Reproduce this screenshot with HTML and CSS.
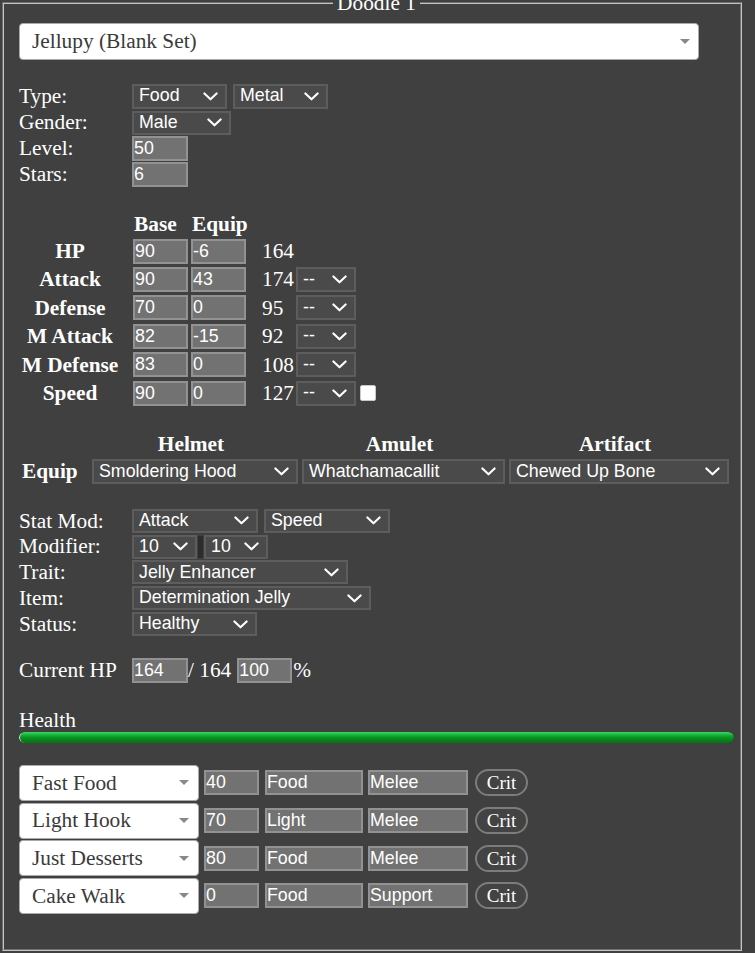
FILE: index.html
```html
<!DOCTYPE html>
<html lang="en">
<head>
<meta charset="utf-8">
<title>Doodle Builder</title>
<link rel="stylesheet" href="styles.css">
</head>
<body>
<svg class="defs" width="0" height="0" aria-hidden="true">
  <symbol id="chev" viewBox="0 0 15 9">
    <path d="M1.4 1.4 L7.5 7.3 L13.6 1.4" fill="none" stroke="#fff" stroke-width="2.1" stroke-linecap="round" stroke-linejoin="round"/>
  </symbol>
</svg>

<fieldset class="doodle">
  <legend>Doodle 1</legend>

  <div class="picker picker-species">
    <span class="picker-text">Jellupy (Blank Set)</span>
    <span class="picker-arrow"></span>
  </div>

  <div class="info">
    <div class="row info-type">
      <span class="lbl">Type:</span>
      <div class="ctrls">
        <span class="sel w-type">Food<svg class="chev"><use href="#chev"/></svg></span>
        <span class="sel w-type">Metal<svg class="chev"><use href="#chev"/></svg></span>
      </div>
    </div>
    <div class="row info-gender">
      <span class="lbl">Gender:</span>
      <div class="ctrls">
        <span class="sel w-gender">Male<svg class="chev"><use href="#chev"/></svg></span>
      </div>
    </div>
    <div class="row info-level">
      <span class="lbl">Level:</span>
      <input class="num w-small" value="50">
    </div>
    <div class="row info-stars">
      <span class="lbl">Stars:</span>
      <input class="num w-small" value="6">
    </div>
  </div>

  <div class="stats">
    <div class="stat-head">
      <span class="stat-name"></span>
      <span class="col-h">Base</span>
      <span class="col-h">Equip</span>
    </div>
    <div class="stat-row">
      <span class="stat-name">HP</span>
      <input class="num w-stat" value="90">
      <input class="num w-stat" value="-6">
      <span class="stat-val">164</span>
    </div>
    <div class="stat-row">
      <span class="stat-name">Attack</span>
      <input class="num w-stat" value="90">
      <input class="num w-stat" value="43">
      <span class="stat-val">174</span>
      <span class="sel w-nature">--<svg class="chev"><use href="#chev"/></svg></span>
    </div>
    <div class="stat-row">
      <span class="stat-name">Defense</span>
      <input class="num w-stat" value="70">
      <input class="num w-stat" value="0">
      <span class="stat-val">95</span>
      <span class="sel w-nature">--<svg class="chev"><use href="#chev"/></svg></span>
    </div>
    <div class="stat-row">
      <span class="stat-name">M Attack</span>
      <input class="num w-stat" value="82">
      <input class="num w-stat" value="-15">
      <span class="stat-val">92</span>
      <span class="sel w-nature">--<svg class="chev"><use href="#chev"/></svg></span>
    </div>
    <div class="stat-row">
      <span class="stat-name">M Defense</span>
      <input class="num w-stat" value="83">
      <input class="num w-stat" value="0">
      <span class="stat-val">108</span>
      <span class="sel w-nature">--<svg class="chev"><use href="#chev"/></svg></span>
    </div>
    <div class="stat-row">
      <span class="stat-name">Speed</span>
      <input class="num w-stat" value="90">
      <input class="num w-stat" value="0">
      <span class="stat-val">127</span>
      <span class="sel w-nature">--<svg class="chev"><use href="#chev"/></svg></span>
      <input type="checkbox" class="chk">
    </div>
  </div>

  <div class="equip">
    <div class="equip-head">
      <span class="equip-h w-helmet">Helmet</span>
      <span class="equip-h w-amulet">Amulet</span>
      <span class="equip-h w-artifact">Artifact</span>
    </div>
    <div class="equip-row">
      <span class="equip-lbl">Equip</span>
      <span class="sel w-helmet">Smoldering Hood<svg class="chev"><use href="#chev"/></svg></span>
      <span class="sel w-amulet">Whatchamacallit<svg class="chev"><use href="#chev"/></svg></span>
      <span class="sel w-artifact">Chewed Up Bone<svg class="chev"><use href="#chev"/></svg></span>
    </div>
  </div>

  <div class="mods">
    <div class="row">
      <span class="lbl">Stat Mod:</span>
      <div class="ctrls">
        <span class="sel sel-sm w-statmod">Attack<svg class="chev"><use href="#chev"/></svg></span>
        <span class="sel sel-sm w-statmod">Speed<svg class="chev"><use href="#chev"/></svg></span>
      </div>
    </div>
    <div class="row">
      <span class="lbl">Modifier:</span>
      <div class="ctrls ctrls-tight">
        <span class="sel sel-sm w-mod">10<svg class="chev"><use href="#chev"/></svg></span>
        <span class="mod-sep"></span>
        <span class="sel sel-sm w-mod2">10<svg class="chev"><use href="#chev"/></svg></span>
      </div>
    </div>
    <div class="row">
      <span class="lbl">Trait:</span>
      <span class="sel sel-sm w-trait">Jelly Enhancer<svg class="chev"><use href="#chev"/></svg></span>
    </div>
    <div class="row">
      <span class="lbl">Item:</span>
      <span class="sel sel-sm w-item">Determination Jelly<svg class="chev"><use href="#chev"/></svg></span>
    </div>
    <div class="row">
      <span class="lbl">Status:</span>
      <span class="sel sel-sm w-status">Healthy<svg class="chev"><use href="#chev"/></svg></span>
    </div>
  </div>

  <div class="row cur-hp">
    <span class="lbl">Current HP</span>
    <input class="num w-small" value="164">
    <span class="hp-max">/ 164</span>
    <input class="num w-stat" value="100">
    <span class="hp-pct">%</span>
  </div>

  <div class="health">
    <div class="health-lbl">Health</div>
    <div class="health-bar"><div class="health-fill" style="width:100%"></div></div>
  </div>

  <div class="moves">
    <div class="move">
      <div class="picker picker-move"><span class="picker-text">Fast Food</span><span class="picker-arrow"></span></div>
      <input class="num move-power" value="40">
      <input class="num move-type" value="Food">
      <input class="num move-cat" value="Melee">
      <button class="crit" type="button">Crit</button>
    </div>
    <div class="move">
      <div class="picker picker-move"><span class="picker-text">Light Hook</span><span class="picker-arrow"></span></div>
      <input class="num move-power" value="70">
      <input class="num move-type" value="Light">
      <input class="num move-cat" value="Melee">
      <button class="crit" type="button">Crit</button>
    </div>
    <div class="move">
      <div class="picker picker-move"><span class="picker-text">Just Desserts</span><span class="picker-arrow"></span></div>
      <input class="num move-power" value="80">
      <input class="num move-type" value="Food">
      <input class="num move-cat" value="Melee">
      <button class="crit" type="button">Crit</button>
    </div>
    <div class="move">
      <div class="picker picker-move"><span class="picker-text">Cake Walk</span><span class="picker-arrow"></span></div>
      <input class="num move-power" value="0">
      <input class="num move-type" value="Food">
      <input class="num move-cat" value="Support">
      <button class="crit" type="button">Crit</button>
    </div>
  </div>
</fieldset>
</body>
</html>
```

FILE: styles.css
```css
* {
  box-sizing: border-box;
}

html,
body {
  margin: 0;
  padding: 0;
}

body {
  height: 953px;
  overflow: hidden;
  background: #404040;
  color: #fff;
  font: 21.33px/1.15 "Liberation Serif", "Times New Roman", serif;
}

.defs {
  position: absolute;
  width: 0;
  height: 0;
}

/* Outer panel */
.doodle {
  margin: -9px 13px 0 2px;
  padding: 0 6px 35px 15px;
  border: 2px groove #c4c4c4;
  min-width: 0;
}

.doodle legend {
  margin: 0 auto;
  padding: 0 4px;
  font-size: 21.33px;
  line-height: 24px;
}

/* Light searchable pickers */
.picker {
  display: flex;
  align-items: center;
  justify-content: space-between;
  background: #fff;
  border: 1px solid #aaa;
  border-radius: 4px;
  color: #3a3a3a;
  padding: 0 8px 0 12px;
  font-size: 21.33px;
  white-space: nowrap;
}

.picker-species {
  width: 680px;
  height: 37px;
  margin-top: 8px;
}

.picker-arrow {
  width: 0;
  height: 0;
  border-style: solid;
  border-width: 5px 5px 0 5px;
  border-color: #888 transparent transparent transparent;
}

/* Label + control rows */
.row {
  display: flex;
  align-items: center;
}

.lbl {
  flex: none;
  width: 113px;
}

.ctrls {
  display: flex;
  align-items: center;
  gap: 6px;
}

.ctrls-tight {
  gap: 1px;
}

/* Dark dropdowns */
.sel {
  flex: none;
  display: flex;
  align-items: center;
  justify-content: space-between;
  height: 25px;
  padding: 0 7px 0 5px;
  border: 2px solid #5d5d5d;
  background: #4a4a4a;
  color: #fff;
  font: 17.8px/1 "Liberation Sans", Arial, sans-serif;
  white-space: nowrap;
}

.sel-sm {
  height: 24px;
}

.chev {
  flex: none;
  width: 15px;
  height: 9px;
  margin-left: 6px;
}

/* Number / text boxes */
.num {
  flex: none;
  height: 25px;
  margin: 0;
  padding: 0;
  border: 2px solid #929292;
  background: #727272;
  color: #fff;
  font: 17.8px/1 "Liberation Sans", Arial, sans-serif;
  outline: none;
}

.w-small {
  width: 56px;
}

.w-stat {
  width: 55px;
}

.w-type {
  width: 95px;
}

.w-gender {
  width: 99px;
  height: 24px;
}

/* Basic info */
.info {
  margin-top: 22px;
}

.info-type {
  height: 28px;
}

.info-gender {
  height: 25px;
}

.info-level {
  height: 26px;
}

.info-stars {
  height: 26px;
}

/* Stats table */
.stats {
  margin-top: 24px;
}

.stat-head {
  display: flex;
  align-items: center;
  height: 26px;
  font-weight: bold;
}

.col-h {
  width: 55px;
  padding-left: 1px;
}

.col-h + .col-h {
  margin-left: 3px;
}

.stat-row {
  display: flex;
  align-items: center;
  height: 28.4px;
}

.stat-name {
  flex: none;
  width: 114px;
  padding-right: 12px;
  text-align: center;
  font-weight: bold;
  white-space: nowrap;
}

.stat-row .num + .num {
  margin-left: 3px;
}

.stat-val {
  flex: none;
  width: 34px;
  margin-left: 16px;
}

.w-nature {
  width: 60px;
}

.chk {
  appearance: none;
  -webkit-appearance: none;
  flex: none;
  width: 16px;
  height: 16px;
  margin: 0 0 0 4px;
  border: 1px solid #c8c8c8;
  border-radius: 2px;
  background: #fff;
}

/* Equipment */
.equip {
  margin-top: 24.6px;
}

.equip-head {
  display: flex;
  align-items: center;
  gap: 4px;
  height: 25px;
  padding-left: 73px;
  font-weight: bold;
}

.equip-h {
  flex: none;
  text-align: center;
  padding-right: 8px;
}

.equip-row {
  display: flex;
  align-items: center;
  gap: 4px;
  height: 29px;
}

.equip-lbl {
  flex: none;
  width: 69px;
  padding-left: 3px;
  font-weight: bold;
}

.w-helmet {
  width: 206px;
}

.w-amulet {
  width: 203px;
}

.w-artifact {
  width: 220px;
}

/* Modifiers */
.mods {
  margin-top: 22px;
}

.mods .row {
  height: 25.8px;
}

.w-statmod {
  width: 126px;
}

.w-mod {
  width: 65px;
}

.w-mod2 {
  width: 64px;
}

.mod-sep {
  width: 5px;
  height: 22px;
  background: #2c2c2c;
}

.w-trait {
  width: 216px;
}

.w-item {
  width: 239px;
}

.w-status {
  width: 125px;
}

/* Current HP */
.cur-hp {
  height: 26px;
  margin-top: 20.5px;
}

.hp-max {
  margin-right: 6px;
}

.hp-pct {
  margin-left: 1px;
}

/* Health bar */
.health {
  margin-top: 25.5px;
}

.health-lbl {
  height: 23px;
  line-height: 23px;
}

.health-bar {
  height: 11px;
  border-radius: 6px;
  background: #2a2a2a;
  overflow: hidden;
}

.health-fill {
  height: 100%;
  border-radius: 6px;
  border-left: 1px solid #d8f0dc;
  background: linear-gradient(to bottom, #3ad763 0%, #1fba44 22%, #0a9a24 45%, #07851a 70%, #067214 100%);
}

/* Moves */
.moves {
  display: flex;
  flex-direction: column;
  gap: 1.67px;
  margin-top: 22px;
}

.move {
  display: flex;
  align-items: center;
  height: 36px;
}

.picker-move {
  flex: none;
  width: 180px;
  height: 36px;
  padding-right: 9px;
}

.move-power {
  width: 55px;
  margin-left: 5px;
}

.move-type {
  width: 98px;
  margin-left: 6px;
}

.move-cat {
  width: 100px;
  margin-left: 5px;
}

.crit {
  flex: none;
  width: 53px;
  height: 27px;
  margin-left: 7px;
  padding: 0;
  border: 2px solid #7c7c7c;
  border-radius: 14px;
  background: #434343;
  color: #fff;
  font: 19px/1 "Liberation Serif", "Times New Roman", serif;
}
```
